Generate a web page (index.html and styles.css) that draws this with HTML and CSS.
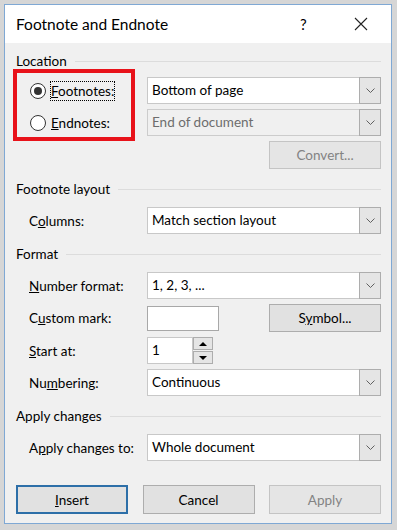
FILE: index.html
```html
<!DOCTYPE html>
<html lang="en">
<head>
    <meta charset="UTF-8">
    <meta name="viewport" content="width=device-width, initial-scale=1.0">
    <title>Footnote and Endnote</title>
    <link rel="stylesheet" href="styles.css">
</head>
<body>
    <div class="window">
        <!-- 标题栏 -->
        <div class="titlebar">
            <span class="title">Footnote and Endnote</span>
            <span class="help">?</span>
            <span class="close">
                <svg width="14" height="14" viewBox="0 0 14 14"><path d="M1 1L13 13M13 1L1 13" stroke="#222" stroke-width="1.1" fill="none"/></svg>
            </span>
        </div>

        <div class="content">
            <!-- Location -->
            <div class="group-title"><span>Location</span></div>
            <div class="location">
                <div class="row">
                    <label class="radio-label"><span class="radio checked"></span><span class="focus"><u>F</u>ootnotes:</span></label>
                    <div class="select"><span class="value">Bottom of page</span><span class="arrow"></span></div>
                </div>
                <div class="row">
                    <label class="radio-label"><span class="radio"></span><span><u>E</u>ndnotes:</span></label>
                    <div class="select disabled"><span class="value">End of document</span><span class="arrow"></span></div>
                </div>
                <div class="row tall">
                    <span></span>
                    <div class="btn-line"><button class="btn" disabled>Convert...</button></div>
                </div>
                <div class="highlight"></div>
            </div>

            <!-- Footnote layout -->
            <div class="group-title"><span>Footnote layout</span></div>
            <div class="row">
                <label class="label">C<u>o</u>lumns:</label>
                <div class="select"><span class="value">Match section layout</span><span class="arrow"></span></div>
            </div>

            <!-- Format -->
            <div class="group-title"><span>Format</span></div>
            <div class="row">
                <label class="label"><u>N</u>umber format:</label>
                <div class="select"><span class="value">1, 2, 3, ...</span><span class="arrow"></span></div>
            </div>
            <div class="row tall">
                <label class="label">C<u>u</u>stom mark:</label>
                <div class="mark-line">
                    <div class="textbox mark"></div>
                    <button class="btn">S<u>y</u>mbol...</button>
                </div>
            </div>
            <div class="row">
                <label class="label"><u>S</u>tart at:</label>
                <div class="spin">
                    <div class="textbox start">1</div>
                    <div class="spin-btns">
                        <span class="spin-up"></span>
                        <span class="spin-down"></span>
                    </div>
                </div>
            </div>
            <div class="row">
                <label class="label">Nu<u>m</u>bering:</label>
                <div class="select"><span class="value">Continuous</span><span class="arrow"></span></div>
            </div>

            <!-- Apply changes -->
            <div class="group-title"><span>Apply changes</span></div>
            <div class="row">
                <label class="label">A<u>p</u>ply changes to:</label>
                <div class="select"><span class="value">Whole document</span><span class="arrow"></span></div>
            </div>

            <!-- 底部按钮 -->
            <div class="footer">
                <button class="btn default"><u>I</u>nsert</button>
                <button class="btn">Cancel</button>
                <button class="btn" disabled>Apply</button>
            </div>
        </div>
    </div>
</body>
</html>
```

FILE: styles.css
```css
body {
    margin: 0;
    padding: 4px 5px 6px 4px;
    background-color: #d6d6d6;
    font-family: Lato, "Noto Sans", sans-serif;
    font-size: 13.5px;
    color: #000;
}
.window {
    border: 1px solid #7fa8d4;
    background-color: #f0f0f0;
    box-sizing: border-box;
    height: 520px;
}
.titlebar {
    height: 38px;
    background-color: #fff;
    display: flex;
    align-items: center;
    padding-left: 11px;
}
.title {
    font-size: 15.5px;
    flex: 1;
}
.help {
    font-size: 15px;
    width: 54px;
}
.close {
    width: 37px;
    display: flex;
    align-items: center;
}
.content {
    padding: 8px 10px 0 11px;
}
.group-title {
    height: 20px;
    display: flex;
    align-items: center;
    margin-top: 10px;
}
.group-title:first-child {
    margin-top: 0;
}
.group-title::after {
    content: "";
    flex: 1;
    border-top: 1px solid #dcdcdc;
    margin-left: 8px;
}
.location {
    position: relative;
}
.row {
    display: grid;
    grid-template-columns: 131px 234px;
    align-items: center;
    height: 27px;
    margin-top: 5px;
}
.group-title + .row {
    margin-top: 8px;
}
.group-title + .location > .row:first-child {
    margin-top: 6px;
}
.row.tall {
    height: 28px;
}
.label {
    padding-left: 13px;
}
.radio-label {
    display: flex;
    align-items: center;
    padding-left: 14px;
}
.radio {
    width: 14px;
    height: 14px;
    border: 1px solid #333;
    border-radius: 50%;
    background-color: #fff;
    margin-right: 5px;
    position: relative;
}
.radio.checked::after {
    content: "";
    position: absolute;
    left: 3px;
    top: 3px;
    width: 8px;
    height: 8px;
    border-radius: 50%;
    background-color: #333;
}
.focus {
    outline: 1px dotted #000;
    line-height: 18px;
}
.highlight {
    position: absolute;
    left: -3px;
    top: -8px;
    width: 114px;
    height: 64px;
    border: 4px solid #e8121a;
}
.select {
    display: flex;
    height: 27px;
    box-sizing: border-box;
    border: 1px solid #c8c8c8;
    background-color: #fff;
}
.select .value {
    flex: 1;
    padding-left: 4px;
    line-height: 25px;
}
.select .arrow {
    width: 20px;
    margin: -1px -1px -1px 0;
    border: 1px solid #adadad;
    background: #e5e5e5 url("data:image/svg+xml,%3Csvg xmlns='http://www.w3.org/2000/svg' width='9' height='5'%3E%3Cpath d='M0.5 0.5L4.5 4.5L8.5 0.5' stroke='%23606060' fill='none'/%3E%3C/svg%3E") center no-repeat;
}
.select.disabled {
    background-color: #f0f0f0;
    border-color: #cccccc;
    color: #6d6d6d;
}
.btn-line, .mark-line {
    display: flex;
    justify-content: space-between;
    align-items: center;
}
.btn {
    width: 112px;
    height: 28px;
    background-color: #e1e1e1;
    border: 1px solid #adadad;
    font-family: inherit;
    font-size: 13.5px;
    color: #000;
    padding: 0;
}
.btn-line .btn {
    margin-left: auto;
}
.btn:disabled {
    color: #838383;
    border-color: #c4c4c4;
    background-color: #e5e5e5;
}
.btn.default {
    border: 2px solid #2d6fa8;
}
.textbox {
    height: 25px;
    box-sizing: border-box;
    border: 1px solid #a8a8a8;
    background-color: #fff;
}
.mark {
    width: 72px;
}
.spin {
    display: flex;
    height: 27px;
}
.start {
    width: 46px;
    height: 27px;
    border-color: #c8c8c8;
    padding-left: 4px;
    line-height: 25px;
}
.spin-btns {
    width: 20px;
    display: flex;
    flex-direction: column;
    justify-content: center;
    gap: 1px;
}
.spin-btns span {
    height: 11px;
    border: 1px solid #adadad;
    background-color: #e5e5e5;
    display: flex;
    justify-content: center;
    align-items: center;
}
.spin-up::after {
    content: "";
    border-left: 4px solid transparent;
    border-right: 4px solid transparent;
    border-bottom: 4px solid #000;
}
.spin-down::after {
    content: "";
    border-left: 4px solid transparent;
    border-right: 4px solid transparent;
    border-top: 4px solid #000;
}
.footer {
    display: flex;
    justify-content: space-between;
    width: 365px;
    margin-top: 24px;
}
.footer .btn {
    width: 112px;
    height: 29px;
}
```
